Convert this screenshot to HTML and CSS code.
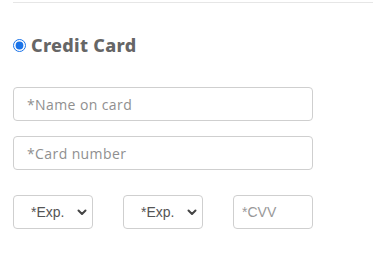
FILE: index.html
```html
<!DOCTYPE html>
<html>
<head>
<meta charset="utf-8">
<link rel="stylesheet" href="styles.css">
</head>
<body>
<div class="panel">
  <div class="divider"></div>
  <label class="method">
    <input type="radio" class="radio" name="pay" checked>
    <span class="method-title">Credit Card</span>
  </label>
  <div class="fields">
    <input class="field" type="text" placeholder="*Name on card">
    <input class="field" type="text" placeholder="*Card number">
  </div>
  <div class="row">
    <div class="select-wrap">
      <select class="select"><option>*Exp.</option></select>
      <svg class="chev" width="10" height="7" viewBox="0 0 10 7"><path d="M1.5 1.5 L5 5 L8.5 1.5" fill="none" stroke="#444" stroke-width="2" stroke-linecap="round" stroke-linejoin="round"/></svg>
    </div>
    <div class="select-wrap">
      <select class="select"><option>*Exp.</option></select>
      <svg class="chev" width="10" height="7" viewBox="0 0 10 7"><path d="M1.5 1.5 L5 5 L8.5 1.5" fill="none" stroke="#444" stroke-width="2" stroke-linecap="round" stroke-linejoin="round"/></svg>
    </div>
    <input class="cvv" type="text" placeholder="*CVV">
  </div>
</div>
</body>
</html>
```
FILE: styles.css
```css
html, body {
  margin: 0;
  padding: 0;
  background: #fff;
}
.panel {
  padding: 2px 0 0 13px;
  font-family: "Open Sans", "Noto Sans", sans-serif;
}
.divider {
  border-top: 1px solid #e6e6e6;
  height: 0;
}
.method {
  display: flex;
  align-items: center;
  gap: 5px;
  margin-top: 29px;
  height: 26px;
}
.radio {
  margin: 0;
  width: 13px;
  height: 13px;
  accent-color: #1a73e8;
}
.method-title {
  font-family: "Noto Sans", sans-serif;
  font-weight: 800;
  font-size: 18px;
  color: #666;
  letter-spacing: 0.3px;
}
.fields {
  display: flex;
  flex-direction: column;
  gap: 15px;
  margin-top: 29px;
}
.field {
  box-sizing: border-box;
  width: 300px;
  height: 34px;
  margin: 0;
  border: 1px solid #cfcfcf;
  border-radius: 4px;
  padding: 0 13px;
  font-family: "Open Sans", sans-serif;
  font-size: 14px;
  letter-spacing: 0.4px;
  color: #333;
  outline: none;
}
.field::placeholder {
  color: #8f8f8f;
}
.row {
  display: flex;
  gap: 30px;
  margin-top: 25px;
}
.select-wrap {
  position: relative;
  width: 80px;
  height: 34px;
}
.select {
  appearance: none;
  -webkit-appearance: none;
  box-sizing: border-box;
  width: 80px;
  height: 34px;
  margin: 0;
  border: 1px solid #cfcfcf;
  border-radius: 4px;
  background: #fff;
  padding: 0 0 0 17px;
  font-family: "Liberation Sans", Arial, sans-serif;
  font-size: 14px;
  color: #555;
  outline: none;
}
.chev {
  position: absolute;
  right: 6px;
  top: 14px;
}
.cvv {
  box-sizing: border-box;
  width: 80px;
  height: 34px;
  margin: 0;
  border: 1px solid #cfcfcf;
  border-radius: 4px;
  padding: 0 8px;
  font-family: "Liberation Sans", Arial, sans-serif;
  font-size: 14px;
  outline: none;
}
.cvv::placeholder {
  color: #999;
}
```
